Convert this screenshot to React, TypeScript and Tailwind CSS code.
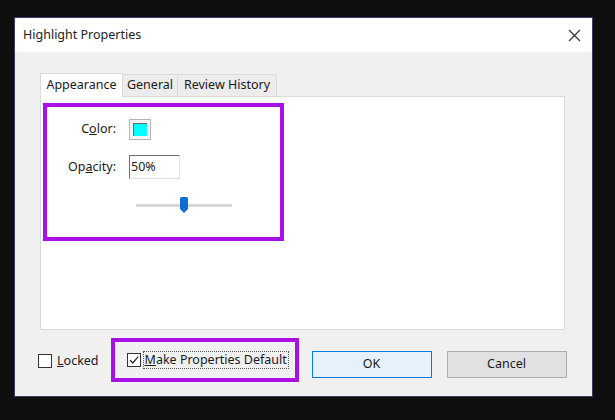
import React from "react";

const font = { fontFamily: '"Noto Sans", "Open Sans", sans-serif' };

function Check({ checked }: { checked?: boolean }) {
  return (
    <div className="w-[14px] h-[14px] border border-[#333] bg-white flex items-center justify-center shrink-0">
      {checked && (
        <svg width="12" height="12" viewBox="0 0 12 12">
          <path d="M2 6.2 L4.8 9 L10.2 2.6" fill="none" stroke="#222" strokeWidth="1.2" />
        </svg>
      )}
    </div>
  );
}

export default function App() {
  return (
    <div className="w-[615px] h-[420px] bg-[#0f0f0f] pt-[17px] pl-[14px]" style={font}>
      <div className="w-[579px] h-[380px] border border-[#3d3a66] flex flex-col bg-[#f0f0f0] text-[12.5px] text-[#1a1a1a]">
        {/* title bar */}
        <div className="h-[34px] bg-white flex items-center justify-between pl-[8px] pr-[11px] shrink-0">
          <span className="text-[12.5px] text-[#222]">Highlight Properties</span>
          <svg width="13" height="13" viewBox="0 0 13 13">
            <path d="M1 1 L12 12 M12 1 L1 12" stroke="#333" strokeWidth="1.2" />
          </svg>
        </div>
        {/* body */}
        <div className="flex-1 flex flex-col">
          <div className="mt-[20px] ml-[25px] mr-[27px] flex flex-col">
            {/* tabs */}
            <div className="flex items-end h-[24px]">
              <div className="h-[24px] w-[83px] bg-white border border-b-0 border-[#d9d9d9] flex items-center justify-center relative z-10 -mb-px pb-px">
                Appearance
              </div>
              <div className="h-[22px] w-[55px] bg-[#ececec] border-t border-r border-[#d9d9d9] flex items-center justify-center">
                General
              </div>
              <div className="h-[22px] w-[99px] bg-[#ececec] border-t border-r border-[#d9d9d9] flex items-center justify-center">
                Review History
              </div>
            </div>
            {/* panel */}
            <div className="h-[234px] bg-white border border-[#d9d9d9] pt-[6px] pl-[2px]">
              <div className="w-[241px] h-[138px] border-4 border-[#a90fe6] flex flex-col pt-[12px]">
                <div className="flex items-center h-[20px]">
                  <div className="w-[69px] text-right">
                    C<span className="underline">o</span>lor:
                  </div>
                  <div className="ml-[13px] w-[22px] h-[21px] border border-[#b3b3b3] bg-[#f4f4f4] p-[3px]">
                    <div className="w-full h-full bg-[#00ffff] border-l border-t border-[#6b6b6b]" />
                  </div>
                </div>
                <div className="flex items-center h-[24px] mt-[16px]">
                  <div className="w-[69px] text-right">
                    Op<span className="underline">a</span>city:
                  </div>
                  <div className="ml-[13px] w-[51px] h-[24px] border-t border-l border-[#6e6e6e] border-r border-b border-r-[#e3e3e3] border-b-[#e3e3e3] bg-white flex items-center pl-[1px]">
                    50%
                  </div>
                </div>
                <div className="flex items-center h-[16px] mt-[18px] ml-[89px] relative">
                  <div className="w-[96px] h-[3px] bg-[#d6d6d6]" />
                  <svg className="absolute left-[43px] top-0" width="10" height="16" viewBox="0 0 10 16">
                    <path d="M1 1.5 Q1 0 2.5 0 L7.5 0 Q9 0 9 1.5 L9 12 L5 16 L1 12 Z" fill="#0a6fd0" />
                  </svg>
                </div>
              </div>
            </div>
          </div>
          {/* bottom row */}
          <div className="flex items-start mt-[8px] ml-[23px]">
            <div className="flex items-center mt-[14px] gap-[5px]">
              <Check />
              <span>
                <span className="underline">L</span>ocked
              </span>
            </div>
            <div className="ml-[12px] w-[188px] h-[44px] border-4 border-[#a90fe6] flex items-center pl-[12px]">
              <Check checked />
              <span className="ml-[2px] px-[1px] border border-dotted border-[#555] leading-[16px]">
                <span className="underline">M</span>ake Properties Default
              </span>
            </div>
            <div className="ml-[13px] mt-[13px] w-[120px] h-[27px] bg-[#e5f1fb] border border-[#0078d7] flex items-center justify-center">
              OK
            </div>
            <div className="ml-[15px] mt-[13px] w-[120px] h-[27px] bg-[#e1e1e1] border border-[#adadad] flex items-center justify-center">
              Cancel
            </div>
          </div>
        </div>
      </div>
    </div>
  );
}
